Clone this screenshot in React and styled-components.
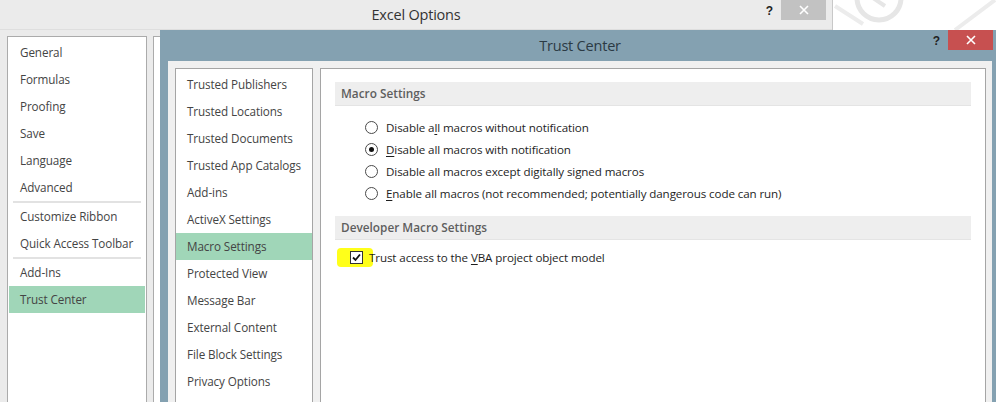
import React from "react";
import styled, { createGlobalStyle } from "styled-components";

const GlobalStyle = createGlobalStyle`
  html, body { margin: 0; padding: 0; background: #ffffff; }
  body { font-family: "Open Sans", "Noto Sans", "Liberation Sans", sans-serif; }
  * { box-sizing: border-box; }
`;

const Screen = styled.div`
  position: relative;
  width: 996px;
  height: 402px;
  overflow: hidden;
  display: flex;
  background: #ffffff;
`;

const OptionsWindow = styled.div`
  width: 833px;
  height: 402px;
  flex: none;
  background: #ebebeb;
  border-right: 1px solid #c8c8c8;
  display: flex;
  flex-direction: column;
`;

const OptionsTitleBar = styled.div`
  position: relative;
  height: 30px;
  flex: none;
  display: flex;
  align-items: center;
  justify-content: center;
  border-bottom: 1px solid #dedede;
`;

const WindowTitle = styled.div`
  font-size: 14.5px;
  color: ${(p) => p.$color || "#333"};
  letter-spacing: -0.2px;
`;

const TitleControls = styled.div`
  position: absolute;
  top: 0;
  right: ${(p) => p.$right}px;
  display: flex;
  align-items: flex-start;
  gap: 8px;
`;

const HelpMark = styled.span`
  font-family: "Liberation Sans", sans-serif;
  font-weight: bold;
  font-size: 12px;
  color: #222;
  line-height: 20px;
  padding-top: 1px;
`;

const CloseButton = styled.div`
  width: 45px;
  height: 20px;
  background: ${(p) => p.$bg};
  display: flex;
  align-items: center;
  justify-content: center;
`;

const OptionsBody = styled.div`
  flex: 1;
  display: flex;
  gap: 6px;
  padding: 6px 0 0 7px;
`;

const NavBox = styled.div`
  width: 140px;
  flex: none;
  background: #ffffff;
  border: 1px solid #ababab;
  border-bottom: none;
  padding: 2px 1px 0;
  display: flex;
  flex-direction: column;
`;

const NavItem = styled.div`
  height: 27px;
  line-height: 27px;
  padding-left: 11px;
  font-size: 11.7px;
  letter-spacing: -0.1px;
  color: #444;
  white-space: nowrap;
  background: ${(p) => (p.$active ? "#a0d6b8" : "transparent")};
`;

const NavSeparator = styled.div`
  height: 2px;
  margin: 0 4px;
  background: #e2e2e2;
`;

const HiddenPanel = styled.div`
  flex: 1;
  background: #ffffff;
  border: 1px solid #ababab;
  border-bottom: none;
`;

const Backdrop = styled.div`
  flex: 1;
  height: 30px;
  background: #ffffff;
`;

const TrustDialog = styled.div`
  position: absolute;
  left: 160px;
  top: 30px;
  width: 840px;
  height: 390px;
  background: #84a1b1;
  display: flex;
  flex-direction: column;
`;

const DialogTitleBar = styled.div`
  position: relative;
  height: 31px;
  flex: none;
  display: flex;
  align-items: center;
  justify-content: center;
`;

const DialogBody = styled.div`
  flex: 1;
  margin: 0 8px;
  background: #f0f0f0;
  padding: 7px 6px 0 7px;
  display: flex;
  gap: 7px;
`;

const CategoryList = styled.div`
  width: 138px;
  flex: none;
  background: #ffffff;
  border: 1px solid #a5a5a5;
  border-bottom: none;
  padding-top: 2px;
  display: flex;
  flex-direction: column;
`;

const ContentPane = styled.div`
  flex: 1;
  background: #ffffff;
  border: 1px solid #a5a5a5;
  border-bottom: none;
  padding: 13px 14px 0;
  display: flex;
  flex-direction: column;
`;

const SectionHeader = styled.div`
  height: 24px;
  line-height: 23px;
  background: #eeeeee;
  border-bottom: 1px solid #e4e4e4;
  padding-left: 6px;
  font-size: 11.8px;
  font-weight: 600;
  color: #5e5e5e;
  margin-top: ${(p) => p.$gap || 0}px;
`;

const OptionGroup = styled.div`
  display: flex;
  flex-direction: column;
  padding: 10px 0 0 30px;
`;

const OptionRow = styled.label`
  height: 22px;
  display: flex;
  align-items: center;
  gap: 8px;
  font-size: 11.6px;
  letter-spacing: -0.1px;
  color: #1e1e1e;
  white-space: nowrap;
`;

const RadioCircle = styled.span`
  width: 13px;
  height: 13px;
  flex: none;
  border-radius: 50%;
  border: 1px solid #4a4a4a;
  background: #ffffff;
  display: flex;
  align-items: center;
  justify-content: center;
  &::after {
    content: "";
    width: 5px;
    height: 5px;
    border-radius: 50%;
    background: ${(p) => (p.$checked ? "#111" : "transparent")};
  }
`;

const AccessKey = styled.span`
  text-decoration: underline;
  text-underline-offset: 2px;
`;

const CheckRow = styled.label`
  position: relative;
  margin-top: 8px;
  height: 19px;
  display: flex;
  align-items: center;
  gap: 6px;
  padding-left: 15px;
  font-size: 11.6px;
  letter-spacing: -0.1px;
  color: #1e1e1e;
  white-space: nowrap;
`;

const Highlight = styled.span`
  position: absolute;
  left: 2px;
  top: 0;
  width: 36px;
  height: 19px;
  background: #ffff1a;
  border-radius: 4px;
  filter: blur(0.6px);
`;

const CheckBox = styled.span`
  position: relative;
  width: 13px;
  height: 13px;
  flex: none;
  border: 1px solid #333;
  background: #ffffff;
  display: flex;
  align-items: center;
  justify-content: center;
`;

const CheckText = styled.span`
  position: relative;
`;

const CloseX = () => (
  <svg width="10" height="10" viewBox="0 0 10 10">
    <path d="M1 1 L9 9 M9 1 L1 9" stroke="#ffffff" strokeWidth="1.6" fill="none" />
  </svg>
);

const Watermark = () => (
  <svg width="163" height="30" viewBox="0 0 163 30" style={{ display: "block" }}>
    <path d="M2 6 L30 24" stroke="#ececec" strokeWidth="4" fill="none" />
    <circle cx="46" cy="-2" r="22" stroke="#e6e6e6" strokeWidth="5" fill="none" />
    <path d="M40 -2 L52 6" stroke="#e6e6e6" strokeWidth="4" fill="none" />
    <path d="M122 30 L162 0" stroke="#ececec" strokeWidth="4" fill="none" />
  </svg>
);

const navItems = [
  "General",
  "Formulas",
  "Proofing",
  "Save",
  "Language",
  "Advanced",
  "-",
  "Customize Ribbon",
  "Quick Access Toolbar",
  "-",
  "Add-Ins",
  "Trust Center",
];

const trustItems = [
  "Trusted Publishers",
  "Trusted Locations",
  "Trusted Documents",
  "Trusted App Catalogs",
  "Add-ins",
  "ActiveX Settings",
  "Macro Settings",
  "Protected View",
  "Message Bar",
  "External Content",
  "File Block Settings",
  "Privacy Options",
];

export default function App() {
  return (
    <>
      <GlobalStyle />
      <Screen>
        <OptionsWindow>
          <OptionsTitleBar>
            <WindowTitle>Excel Options</WindowTitle>
            <TitleControls $right={6}>
              <HelpMark>?</HelpMark>
              <CloseButton $bg="#c2c2c2">
                <CloseX />
              </CloseButton>
            </TitleControls>
          </OptionsTitleBar>
          <OptionsBody>
            <NavBox>
              {navItems.map((item, i) =>
                item === "-" ? (
                  <NavSeparator key={i} />
                ) : (
                  <NavItem key={i} $active={item === "Trust Center"}>
                    {item}
                  </NavItem>
                )
              )}
            </NavBox>
            <HiddenPanel />
          </OptionsBody>
        </OptionsWindow>
        <Backdrop>
          <Watermark />
        </Backdrop>

        <TrustDialog>
          <DialogTitleBar>
            <WindowTitle $color="#2b3a44">Trust Center</WindowTitle>
            <TitleControls $right={7}>
              <HelpMark>?</HelpMark>
              <CloseButton $bg="#c75050">
                <CloseX />
              </CloseButton>
            </TitleControls>
          </DialogTitleBar>
          <DialogBody>
            <CategoryList>
              {trustItems.map((item) => (
                <NavItem key={item} $active={item === "Macro Settings"}>
                  {item}
                </NavItem>
              ))}
            </CategoryList>
            <ContentPane>
              <SectionHeader>Macro Settings</SectionHeader>
              <OptionGroup>
                <OptionRow>
                  <RadioCircle />
                  <span>
                    Disable a<AccessKey>l</AccessKey>l macros without notification
                  </span>
                </OptionRow>
                <OptionRow>
                  <RadioCircle $checked />
                  <span>
                    <AccessKey>D</AccessKey>isable all macros with notification
                  </span>
                </OptionRow>
                <OptionRow>
                  <RadioCircle />
                  <span>
                    Disable all macros except di<AccessKey>g</AccessKey>itally signed macros
                  </span>
                </OptionRow>
                <OptionRow>
                  <RadioCircle />
                  <span>
                    <AccessKey>E</AccessKey>nable all macros (not recommended; potentially dangerous code can run)
                  </span>
                </OptionRow>
              </OptionGroup>
              <SectionHeader $gap={12}>Developer Macro Settings</SectionHeader>
              <CheckRow>
                <Highlight />
                <CheckBox>
                  <svg width="9" height="9" viewBox="0 0 9 9">
                    <path d="M1 4.5 L3.5 7 L8 1.5" stroke="#111" strokeWidth="1.8" fill="none" />
                  </svg>
                </CheckBox>
                <CheckText>
                  Trust access to the <AccessKey>V</AccessKey>BA project object model
                </CheckText>
              </CheckRow>
            </ContentPane>
          </DialogBody>
        </TrustDialog>
      </Screen>
    </>
  );
}
